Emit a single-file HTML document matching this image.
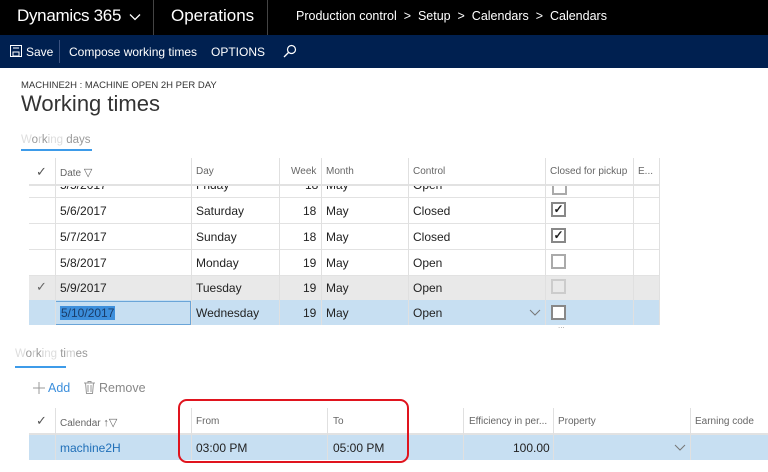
<!DOCTYPE html>
<html><head><meta charset="utf-8"><style>
*{margin:0;padding:0;box-sizing:border-box}
body{width:768px;height:472px;overflow:hidden;background:#fff;font-family:"Liberation Sans",sans-serif;position:relative;color:#222}
.a{position:absolute;white-space:nowrap}
.top{left:0;top:0;width:768px;height:35px;background:#000;color:#fff}
.tb{left:0;top:35px;width:768px;height:33px;background:#002050;color:#fff;font-size:12px}
.vl{position:absolute;top:0;width:1px;height:35px;background:#444}
.hd{font-size:10px;color:#666}
.cell{font-size:12px;color:#222}
.hl{position:absolute;height:1px;background:#e2e2e2}
.vg{position:absolute;width:1px;background:#e0e0e0}
.cb{position:absolute;width:15px;height:15px;border:2px solid #aaa;background:#fff}
</style></head><body>
<div class="a top">
 <div class="a" style="left:17px;top:6px;font-size:17px;letter-spacing:-0.3px">Dynamics 365</div>
 <svg class="a" style="left:129px;top:13px" width="12" height="8" viewBox="0 0 12 8"><path d="M1 1.5 L6 6.5 L11 1.5" fill="none" stroke="#fff" stroke-width="1.3"/></svg>
 <div class="vl" style="left:153px"></div>
 <div class="a" style="left:171px;top:6px;font-size:17px">Operations</div>
 <div class="vl" style="left:267px"></div>
 <div class="a" style="left:296px;top:9px;font-size:12.5px">Production control &nbsp;&gt;&nbsp; Setup &nbsp;&gt;&nbsp; Calendars &nbsp;&gt;&nbsp; Calendars</div>
</div>
<div class="a tb">
 <svg class="a" style="left:10px;top:10px" width="12" height="12" viewBox="0 0 12 12"><rect x="0.5" y="0.5" width="11" height="11" fill="none" stroke="#fff"/><rect x="3" y="7" width="6" height="4" fill="none" stroke="#fff"/><line x1="3" y1="3" x2="9" y2="3" stroke="#fff"/></svg>
 <div class="a" style="left:26px;top:10px">Save</div>
 <div class="a" style="left:59px;top:5px;width:1px;height:23px;background:#3a5280"></div>
 <div class="a" style="left:69px;top:10px">Compose working times</div>
 <div class="a" style="left:211px;top:10px">OPTIONS</div>
 <svg class="a" style="left:283px;top:9px" width="14" height="14" viewBox="0 0 14 14"><circle cx="8.5" cy="5.5" r="4" fill="none" stroke="#fff" stroke-width="1.2"/><line x1="5.5" y1="8.5" x2="1" y2="13" stroke="#fff" stroke-width="1.3"/></svg>
</div>
<div class="a" style="left:21px;top:80px;font-size:9.5px;color:#333">MACHINE2H : MACHINE OPEN 2H PER DAY</div>
<div class="a" style="left:21px;top:91px;font-size:22px;color:#333">Working times</div>
<div class="a" style="left:21px;top:134px;font-size:11.5px;color:#999"><span style="color:#ddd">W</span>o<span style="color:#ccc">r</span>k<span style="color:#ccc">i</span><span style="color:#ddd">n</span><span style="color:#ddd">g</span> days</div>
<div class="a" style="left:21px;top:149px;width:71px;height:2px;background:#3d9be9"></div>

<!-- grid 1 -->
<div class="a" style="left:29px;top:275px;width:631px;height:25px;background:#e9e9e9"></div>
<div class="a" style="left:29px;top:300px;width:631px;height:25px;background:#c7dff2"></div>
<div class="a" style="left:55px;top:301px;width:136px;height:24px;border:1px solid #6aa5d8;background:#c7dff2"></div>
<div class="hl" style="left:29px;top:184px;width:631px;height:2px"></div>
<div class="hl" style="left:29px;top:197px;width:631px"></div>
<div class="hl" style="left:29px;top:223px;width:631px"></div>
<div class="hl" style="left:29px;top:249px;width:631px"></div>
<div class="hl" style="left:29px;top:275px;width:631px"></div>
<div class="vg" style="left:55px;top:158px;height:167px"></div>
<div class="vg" style="left:191px;top:158px;height:167px"></div>
<div class="vg" style="left:279px;top:158px;height:167px"></div>
<div class="vg" style="left:321px;top:158px;height:167px"></div>
<div class="vg" style="left:408px;top:158px;height:167px"></div>
<div class="vg" style="left:545px;top:158px;height:167px"></div>
<div class="vg" style="left:633px;top:158px;height:167px"></div>
<div class="vg" style="left:659px;top:158px;height:167px"></div>
<div class="a" style="left:36px;top:164px;font-size:13px;color:#555">&#10003;</div>
<div class="a hd" style="left:60px;top:166px">Date <span style="font-size:11px">&#9661;</span></div>
<div class="a hd" style="left:196px;top:166px">Day</div>
<div class="a hd" style="left:291px;top:166px">Week</div>
<div class="a hd" style="left:326px;top:166px">Month</div>
<div class="a hd" style="left:413px;top:166px">Control</div>
<div class="a hd" style="left:550px;top:166px">Closed for pickup</div>
<div class="a hd" style="left:638px;top:166px">E...</div>
<div class="a" style="left:29px;top:186px;width:631px;height:11px;overflow:hidden">
 <div class="a cell" style="left:31px;top:-8px">5/5/2017</div><div class="a cell" style="left:167px;top:-8px">Friday</div><div class="a cell" style="left:276px;top:-8px">18</div><div class="a cell" style="left:297px;top:-8px">May</div><div class="a cell" style="left:384px;top:-8px">Open</div>
 <div class="cb" style="left:523px;top:-6px"></div>
</div>
<div class="a cell" style="left:60px;top:204px">5/6/2017</div><div class="a cell" style="left:196px;top:204px">Saturday</div><div class="a cell" style="left:303px;top:204px">18</div><div class="a cell" style="left:326px;top:204px">May</div><div class="a cell" style="left:413px;top:204px">Closed</div>
<div class="a cell" style="left:60px;top:230px">5/7/2017</div><div class="a cell" style="left:196px;top:230px">Sunday</div><div class="a cell" style="left:303px;top:230px">18</div><div class="a cell" style="left:326px;top:230px">May</div><div class="a cell" style="left:413px;top:230px">Closed</div>
<div class="a cell" style="left:60px;top:256px">5/8/2017</div><div class="a cell" style="left:196px;top:256px">Monday</div><div class="a cell" style="left:303px;top:256px">19</div><div class="a cell" style="left:326px;top:256px">May</div><div class="a cell" style="left:413px;top:256px">Open</div>
<div class="a" style="left:36px;top:279px;font-size:13px;color:#666">&#10003;</div>
<div class="a cell" style="left:60px;top:281px">5/9/2017</div><div class="a cell" style="left:196px;top:281px">Tuesday</div><div class="a cell" style="left:303px;top:281px">19</div><div class="a cell" style="left:326px;top:281px">May</div><div class="a cell" style="left:413px;top:281px">Open</div>
<div class="a cell" style="left:60px;top:306px;background:#3d8fdc;color:#1a3d6a;padding:0 1px">5/10/2017</div><div class="a cell" style="left:196px;top:306px">Wednesday</div><div class="a cell" style="left:303px;top:306px">19</div><div class="a cell" style="left:326px;top:306px">May</div><div class="a cell" style="left:413px;top:306px">Open</div>
<svg class="a" style="left:529px;top:309px" width="12" height="7" viewBox="0 0 12 7"><path d="M1 1 L6 6 L11 1" fill="none" stroke="#777" stroke-width="1"/></svg>
<div class="cb" style="left:551px;top:202px;border-color:#888;font-size:12px;line-height:10px;text-align:center;font-weight:bold">&#10003;</div>
<div class="cb" style="left:551px;top:228px;border-color:#888;font-size:12px;line-height:10px;text-align:center;font-weight:bold">&#10003;</div>
<div class="cb" style="left:551px;top:254px"></div>
<div class="cb" style="left:551px;top:279px;background:#e9e9e9;border-color:#ccc"></div>
<div class="cb" style="left:551px;top:305px;border-color:#888"></div>
<div class="a" style="left:558px;top:321px;font-size:8px;color:#999">...</div>

<!-- tab 2 -->
<div class="a" style="left:15px;top:348px;font-size:11.5px;color:#999"><span style="color:#ddd">W</span>o<span style="color:#ccc">r</span>k<span style="color:#ccc">i</span><span style="color:#ddd">ng</span> ti<span style="color:#ccc">m</span>es</div>
<div class="a" style="left:15px;top:366px;width:51px;height:2px;background:#3d9be9"></div>
<svg class="a" style="left:33px;top:382px" width="12" height="12" viewBox="0 0 12 12"><path d="M6 0 V12 M0 6 H12" stroke="#999" stroke-width="1"/></svg>
<div class="a" style="left:48px;top:381px;font-size:12.5px;color:#3d8fdc">Add</div>
<svg class="a" style="left:84px;top:381px" width="11" height="13" viewBox="0 0 11 13"><path d="M0 2 H11 M4 2 V0.5 H7 V2 M1.5 2 L2.5 12.5 H8.5 L9.5 2 M4 4 V11 M7 4 V11" fill="none" stroke="#999" stroke-width="1"/></svg>
<div class="a" style="left:99px;top:381px;font-size:12.5px;color:#888">Remove</div>

<!-- grid 2 -->
<div class="a" style="left:29px;top:434px;width:739px;height:26px;background:#c7dff2"></div>
<div class="hl" style="left:29px;top:433px;width:739px;height:2px"></div>
<div class="vg" style="left:55px;top:408px;height:52px"></div>
<div class="vg" style="left:191px;top:408px;height:52px"></div>
<div class="vg" style="left:327px;top:408px;height:52px"></div>
<div class="vg" style="left:463px;top:408px;height:52px"></div>
<div class="vg" style="left:553px;top:408px;height:52px"></div>
<div class="vg" style="left:690px;top:408px;height:52px"></div>
<div class="a" style="left:36px;top:413px;font-size:13px;color:#555">&#10003;</div>
<div class="a hd" style="left:60px;top:416px">Calendar <span style="font-size:11px">&#8593;&#9661;</span></div>
<div class="a hd" style="left:196px;top:416px">From</div>
<div class="a hd" style="left:333px;top:416px">To</div>
<div class="a hd" style="left:469px;top:416px">Efficiency in per...</div>
<div class="a hd" style="left:558px;top:416px">Property</div>
<div class="a hd" style="left:695px;top:416px">Earning code</div>
<div class="a cell" style="left:60px;top:441px;color:#1f6fb8">machine2H</div>
<div class="a cell" style="left:196px;top:441px">03:00 PM</div>
<div class="a cell" style="left:333px;top:441px">05:00 PM</div>
<div class="a cell" style="left:513px;top:441px">100.00</div>
<svg class="a" style="left:674px;top:444px" width="12" height="7" viewBox="0 0 12 7"><path d="M1 1 L6 6 L11 1" fill="none" stroke="#777" stroke-width="1"/></svg>
<div class="a" style="left:178px;top:399px;width:231px;height:64px;border:2px solid #e0141e;border-radius:9px"></div>
</body></html>
